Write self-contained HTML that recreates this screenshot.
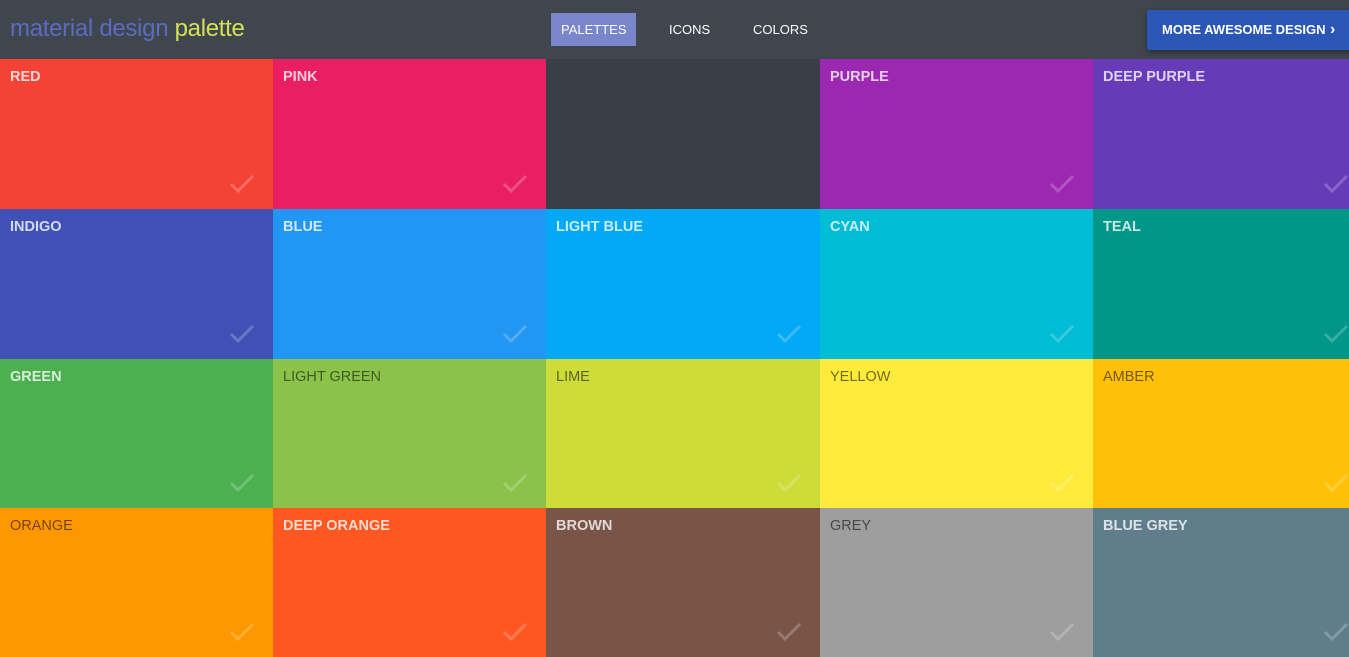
<!DOCTYPE html>
<html><head><meta charset="utf-8"><style>
*{margin:0;padding:0;box-sizing:border-box}
body{width:1349px;height:657px;overflow:hidden;background:#3f454d;font-family:"Liberation Sans",Arial,sans-serif}
.hdr{position:absolute;left:0;top:0;width:1349px;height:59px;background:#3f464e}
.logo{position:absolute;left:10px;top:15px;font-size:24px;color:#5c6bc0;letter-spacing:-0.3px}
.logo span{color:#d4e157}
.nav{position:absolute;top:13px;height:33px;line-height:33px;font-size:13px;color:#fff;padding:0 10px}
.btn{position:absolute;left:1147px;top:10px;width:210px;height:40px;background:#2a57b5;color:#fff;font-weight:bold;font-size:13px;line-height:40px;padding-left:15px;border-radius:2px;box-shadow:0 2px 6px rgba(0,0,0,.4)}
.btn i{position:absolute;left:183px;top:0;font-style:normal;font-size:16px}
.grid{position:absolute;left:0;top:59px;width:1367px;display:grid;grid-template-columns:273px 273px 274px 273px 274px;grid-template-rows:150px 150px 149px 149px}
.c{position:relative;overflow:hidden}
.c b{position:absolute;left:10px;top:10px;font-size:14.5px;font-weight:bold;color:rgba(255,255,255,.78)}
.c.d b{font-weight:normal;color:rgba(0,0,0,.55)}
.c svg{position:absolute;right:18px;bottom:15px;width:26px;height:20px}
.c svg path{fill:none;stroke:rgba(255,255,255,.22);stroke-width:3}
</style></head><body>
<div class="hdr">
<div class="logo">material design <span>palette</span></div>
<div class="nav" style="left:551px;width:85px;background:#7986cb">PALETTES</div>
<div class="nav" style="left:659px">ICONS</div>
<div class="nav" style="left:743px">COLORS</div>
<div class="btn">MORE AWESOME DESIGN<i>›</i></div>
</div>
<div class="grid">
<div class="c" style="background:#f44336"><b>RED</b><svg viewBox="0 0 26 20"><path d="M2 10l7 7L24 2"/></svg></div>
<div class="c" style="background:#e91e63"><b>PINK</b><svg viewBox="0 0 26 20"><path d="M2 10l7 7L24 2"/></svg></div>
<div class="c" style="background:#393f47"></div>
<div class="c" style="background:#9c27b0"><b>PURPLE</b><svg viewBox="0 0 26 20"><path d="M2 10l7 7L24 2"/></svg></div>
<div class="c" style="background:#673ab7"><b>DEEP PURPLE</b><svg viewBox="0 0 26 20"><path d="M2 10l7 7L24 2"/></svg></div>
<div class="c" style="background:#3f51b5"><b>INDIGO</b><svg viewBox="0 0 26 20"><path d="M2 10l7 7L24 2"/></svg></div>
<div class="c" style="background:#2196f3"><b>BLUE</b><svg viewBox="0 0 26 20"><path d="M2 10l7 7L24 2"/></svg></div>
<div class="c" style="background:#03a9f4"><b>LIGHT BLUE</b><svg viewBox="0 0 26 20"><path d="M2 10l7 7L24 2"/></svg></div>
<div class="c" style="background:#00bcd4"><b>CYAN</b><svg viewBox="0 0 26 20"><path d="M2 10l7 7L24 2"/></svg></div>
<div class="c" style="background:#009688"><b>TEAL</b><svg viewBox="0 0 26 20"><path d="M2 10l7 7L24 2"/></svg></div>
<div class="c" style="background:#4caf50"><b>GREEN</b><svg viewBox="0 0 26 20"><path d="M2 10l7 7L24 2"/></svg></div>
<div class="c d" style="background:#8bc34a"><b>LIGHT GREEN</b><svg viewBox="0 0 26 20"><path d="M2 10l7 7L24 2"/></svg></div>
<div class="c d" style="background:#cddc39"><b>LIME</b><svg viewBox="0 0 26 20"><path d="M2 10l7 7L24 2"/></svg></div>
<div class="c d" style="background:#ffeb3b"><b>YELLOW</b><svg viewBox="0 0 26 20"><path d="M2 10l7 7L24 2"/></svg></div>
<div class="c d" style="background:#ffc107"><b>AMBER</b><svg viewBox="0 0 26 20"><path d="M2 10l7 7L24 2"/></svg></div>
<div class="c d" style="background:#ff9800"><b>ORANGE</b><svg viewBox="0 0 26 20"><path d="M2 10l7 7L24 2"/></svg></div>
<div class="c" style="background:#ff5722"><b>DEEP ORANGE</b><svg viewBox="0 0 26 20"><path d="M2 10l7 7L24 2"/></svg></div>
<div class="c" style="background:#795548"><b>BROWN</b><svg viewBox="0 0 26 20"><path d="M2 10l7 7L24 2"/></svg></div>
<div class="c d" style="background:#9e9e9e"><b>GREY</b><svg viewBox="0 0 26 20"><path d="M2 10l7 7L24 2"/></svg></div>
<div class="c" style="background:#607d8b"><b>BLUE GREY</b><svg viewBox="0 0 26 20"><path d="M2 10l7 7L24 2"/></svg></div>
</div>
</body></html>
